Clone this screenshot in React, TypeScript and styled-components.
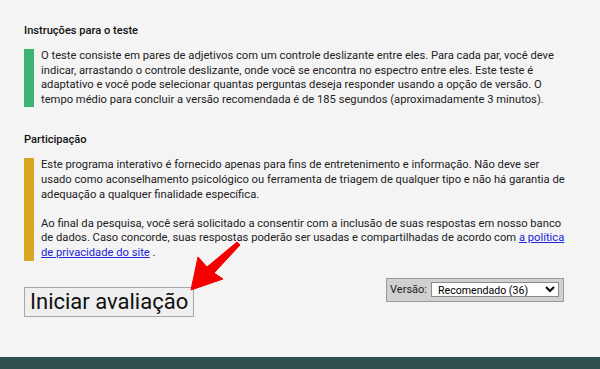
import styled, { createGlobalStyle } from 'styled-components';

const GlobalStyle = createGlobalStyle`
  html, body {
    margin: 0;
    padding: 0;
    background-color: #f4f4f4;
    font-family: Roboto, 'Liberation Sans', sans-serif;
  }
`;

const Page = styled.div`
  position: relative;
  height: 369px;
  overflow: hidden;
`;

const Content = styled.main`
  padding: 0 24px;
`;

const SectionTitle = styled.h3<{ $top: number }>`
  margin: ${(p) => p.$top}px 0 10px;
  font-size: 11.1px;
  line-height: 16px;
  font-weight: 500;
  color: #111;
`;

const Callout = styled.div<{ $color: string }>`
  border-left: 10px solid ${(p) => p.$color};
  padding-left: 7px;
  margin-right: 8px;
  font-size: 11.2px;
  line-height: 14.6px;
  color: #222;

  p {
    margin: 0;
  }

  p + p {
    margin-top: 14.6px;
  }

  a {
    color: #2323d8;
  }
`;

const ActionRow = styled.div`
  display: flex;
  justify-content: space-between;
  align-items: flex-start;
`;

const StartButton = styled.button`
  margin-top: 26px;
  height: 30px;
  padding: 0 5px;
  font-family: Roboto, 'Liberation Sans', sans-serif;
  font-size: 22px;
  line-height: 28px;
  color: #111;
  background: #efefef;
  border: 1px solid #a8a8a8;
  border-radius: 0;
`;

const VersionBox = styled.label`
  margin-top: 17px;
  margin-right: 12px;
  display: flex;
  align-items: center;
  gap: 4px;
  height: 24px;
  box-sizing: border-box;
  padding: 0 4px 0 3px;
  background: #d0d0d0;
  border: 1px solid #999;
  font-size: 11px;
  color: #222;
`;

const VersionSelect = styled.select`
  width: 128px;
  height: 15px;
  padding: 0 2px;
  font-family: Roboto, 'Liberation Sans', sans-serif;
  font-size: 10.6px;
  background: #fff;
  border: 1px solid #8a8a8a;
  border-radius: 0;
`;

const Footer = styled.footer`
  margin-top: 40px;
  height: 13px;
  background-color: #2f4f4f;
`;

const Arrow = styled.svg`
  position: absolute;
  left: 0;
  top: 0;
  pointer-events: none;
`;

export default function App() {
  return (
    <Page>
      <GlobalStyle />
      <Content>
        <SectionTitle $top={23}>Instruções para o teste</SectionTitle>
        <Callout $color="#3cb371">
          <p>
            O teste consiste em pares de adjetivos com um controle deslizante entre eles. Para cada par, você deve
            indicar, arrastando o controle deslizante, onde você se encontra no espectro entre eles. Este teste é
            <br />
            adaptativo e você pode selecionar quantas perguntas deseja responder usando a opção de versão. O tempo
            médio para concluir a versão recomendada é de 185 segundos (aproximadamente 3 minutos).
          </p>
        </Callout>

        <SectionTitle $top={25}>Participação</SectionTitle>
        <Callout $color="#daa520">
          <p>
            Este programa interativo é fornecido apenas para fins de entretenimento e informação. Não deve ser
            usado como aconselhamento psicológico ou ferramenta de triagem de qualquer tipo e não há garantia de
            adequação a qualquer finalidade específica.
          </p>
          <p>
            Ao final da pesquisa, você será solicitado a consentir com a inclusão de suas respostas em nosso banco
            de dados. Caso concorde, suas respostas poderão ser usadas e compartilhadas de acordo com{' '}
            <a href="#privacidade">a política de privacidade do site</a> .
          </p>
        </Callout>

        <ActionRow>
          <StartButton type="button">Iniciar avaliação</StartButton>
          <VersionBox>
            Versão:
            <VersionSelect defaultValue="36">
              <option value="36">Recomendado (36)</option>
            </VersionSelect>
          </VersionBox>
        </ActionRow>
      </Content>
      <Footer />

      <Arrow width="600" height="369" viewBox="0 0 600 369">
        <polygon
          points="191,290 198,257 207,267 237,242 240,245 214,273 223,279"
          fill="#f40000"
          stroke="#f40000"
          strokeWidth="1"
          strokeLinejoin="round"
        />
      </Arrow>
    </Page>
  );
}
